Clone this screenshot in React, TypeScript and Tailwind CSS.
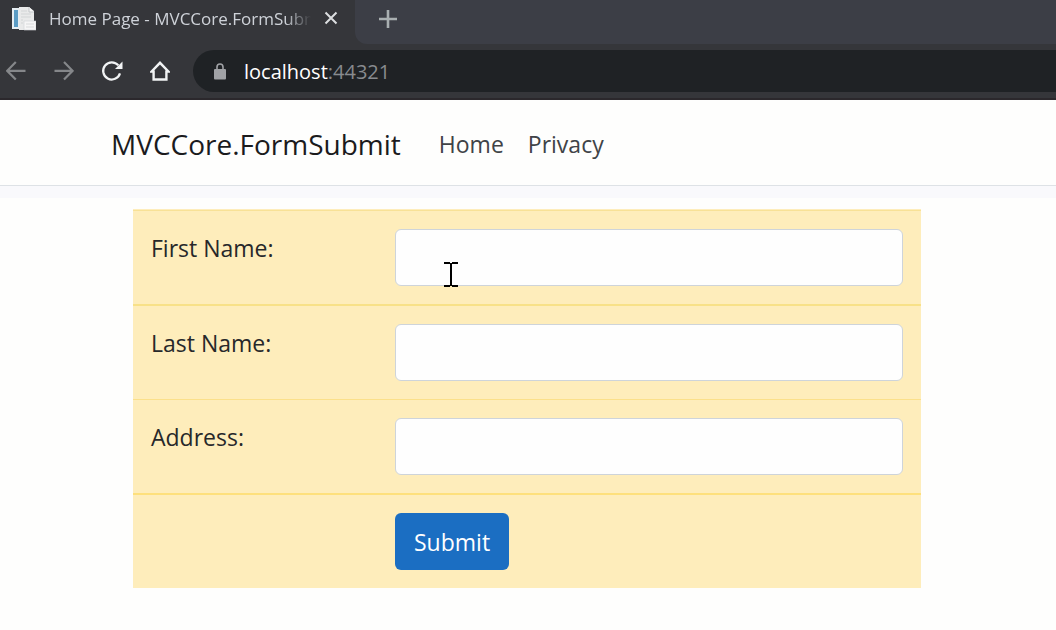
import React from 'react';

interface Field {
    id: string;
    label: string;
    border: string;
}

const fields: Field[] = [
    { id: 'firstName', label: 'First Name:', border: 'border-t border-[#f8e196]' },
    { id: 'lastName', label: 'Last Name:', border: 'border-t-2 border-[#f8e188]' },
    { id: 'address', label: 'Address:', border: 'border-t border-[#fbe08a]' },
];

const FaviconIcon: React.FC = () => (
    <svg className="h-6 w-6 shrink-0" viewBox="0 0 24 24" aria-hidden="true">
        <path d="M0 1h8v21H0z" fill="#e6eef2" />
        <path d="M2 3h4v17H2z" fill="#5b9cc4" />
        <path d="M7 0h10l5 4v19H7z" fill="#e9eaea" />
        <path d="M17 0v5h5" fill="#f8f8f8" stroke="#c3c7c9" strokeWidth="1" />
        <path d="M9 4h6M9 7h10M9 10h10M9 13h2M9 16h2" stroke="#d2d5d6" strokeWidth="1" />
        <path d="M12 14h12v9H12z" fill="#f6f6f6" stroke="#d2d5d6" strokeWidth="0.6" />
        <path d="M14 17h8M14 20h8" stroke="#d8dadb" strokeWidth="1" />
    </svg>
);

const Browser: React.FC = () => (
    <header className="border-b-2 border-[#2b282c] bg-[#35363a]">
        <div className="flex h-11 bg-[#3c3e46]">
            <div className="flex w-[355px] shrink-0 items-start bg-[#35363a] pt-[7px] pl-3">
                <FaviconIcon />
                <span className="ml-[13px] w-[262px] overflow-hidden text-[17px] leading-6 whitespace-nowrap text-[#ced2d8] [mask-image:linear-gradient(to_right,#000_236px,transparent_262px)]">
                    Home Page - MVCCore.FormSubmit
                </span>
                <button type="button" aria-label="Close tab" className="mt-1 ml-[13px] text-[#dcdee0]">
                    <svg className="h-[14px] w-[14px]" viewBox="0 0 14 14" fill="none" stroke="currentColor" strokeWidth="2">
                        <path d="M1.5 1.5l11 11M12.5 1.5l-11 11" />
                    </svg>
                </button>
            </div>
            <div className="grow bg-[#35363a]">
                <div className="h-full rounded-bl-xl bg-[#3c3e46] pt-[10px] pl-6">
                    <button type="button" aria-label="New tab" className="block text-[#a9afb1]">
                        <svg className="h-[18px] w-[18px]" viewBox="0 0 18 18" fill="none" stroke="currentColor" strokeWidth="2.6">
                            <path d="M9 0v18M0 9h18" />
                        </svg>
                    </button>
                </div>
            </div>
        </div>
        <div className="flex items-center pt-[6px] pb-[6px] pl-[6px]">
            <button type="button" aria-label="Back" className="text-[#85878a]">
                <svg className="h-5 w-5" viewBox="0 0 20 20" fill="none" stroke="currentColor" strokeWidth="2.2">
                    <path d="M19.5 9.8H1.5M9.8 1L1.2 9.8l8.6 8.8" />
                </svg>
            </button>
            <button type="button" aria-label="Forward" className="ml-7 text-[#85878a]">
                <svg className="h-5 w-5" viewBox="0 0 20 20" fill="none" stroke="currentColor" strokeWidth="2.2">
                    <path d="M.5 9.8h18M10 1l8.6 8.8-8.6 8.8" />
                </svg>
            </button>
            <button type="button" aria-label="Reload" className="ml-[27px] text-[#f1f3f4]">
                <svg className="h-[22px] w-[22px]" viewBox="0 0 22 22" fill="none">
                    <path d="M19 13.4A8.6 8.6 0 1 1 17.4 5.4" stroke="currentColor" strokeWidth="2.2" />
                    <path d="M21.5 1.5v7.5H14z" fill="currentColor" />
                </svg>
            </button>
            <button type="button" aria-label="Home" className="ml-[27px] text-[#f1f3f4]">
                <svg className="h-5 w-5" viewBox="0 0 20 20" fill="none" stroke="currentColor" strokeWidth="2.4">
                    <path d="M3.4 10.5H1.6L10 1.8l8.4 8.7h-1.8M3.6 9.5v9h12.8v-9" />
                </svg>
            </button>
            <div className="ml-[23px] flex h-[42px] grow items-center rounded-l-full bg-[#1f2225] pl-[21px]">
                <svg className="h-[17px] w-3 shrink-0" viewBox="0 0 12 17" fill="none" aria-hidden="true">
                    <rect y="6" width="12" height="10.5" rx="1" fill="#a0a2a6" />
                    <path d="M3 7V4a3 3 0 0 1 6 0v3" stroke="#a0a2a6" strokeWidth="1.6" />
                </svg>
                <span className="ml-[18px] pt-px text-xl text-[#888b8f]">
                    <span className="text-white">localhost</span>:44321
                </span>
            </div>
        </div>
    </header>
);

const Navbar: React.FC = () => (
    <nav className="flex items-center border-b border-[#dee2e6] pt-[22px] pb-[19px] pl-[111px] shadow-[0_12px_0_#f9f9fc]">
        <a href="#" className="text-[28px] leading-[44px] text-[#1b1b1d]">
            MVCCore.FormSubmit
        </a>
        <a href="#" className="ml-[38px] text-[23px] text-[#404347]">
            Home
        </a>
        <a href="#" className="ml-6 text-[23px] text-[#404347]">
            Privacy
        </a>
    </nav>
);

const App: React.FC = () => {
    return (
        <div className="min-h-screen bg-[#fefefd] font-['Open_Sans',sans-serif]">
            <Browser />
            <Navbar />
            <main className="relative pt-[23px] pr-[135px] pl-[133px]">
                <form className="bg-[#feedbb] pt-px text-[#27282a]" onSubmit={(e) => e.preventDefault()}>
                    {fields.map((field) => (
                        <div key={field.id} className={`flex items-start p-[18px] ${field.border}`}>
                            <label htmlFor={field.id} className="w-[244px] shrink-0 text-[23px] leading-[38px]">
                                {field.label}
                            </label>
                            <input
                                id={field.id}
                                type="text"
                                className="h-[57px] min-w-0 grow rounded-md border border-[#ced4da] bg-[#fefefe] px-4 text-[23px] outline-none"
                            />
                        </div>
                    ))}
                    <div className="border-t-2 border-[#fee07c] p-[18px] pl-[262px]">
                        <button
                            type="submit"
                            className="block h-[57px] rounded-md bg-[#1b6ec2] px-[19px] pt-[2px] text-[23px] text-white"
                        >
                            Submit
                        </button>
                    </div>
                </form>
                {/* text cursor over the first input */}
                <svg className="absolute top-[76px] left-[444px] h-[25px] w-[14px]" viewBox="0 0 14 25" aria-hidden="true">
                    <path d="M0 1h6M8 1h6M7 1v23M0 24h6M8 24h6" stroke="#000" strokeWidth="2" />
                </svg>
            </main>
        </div>
    );
};

export default App;
